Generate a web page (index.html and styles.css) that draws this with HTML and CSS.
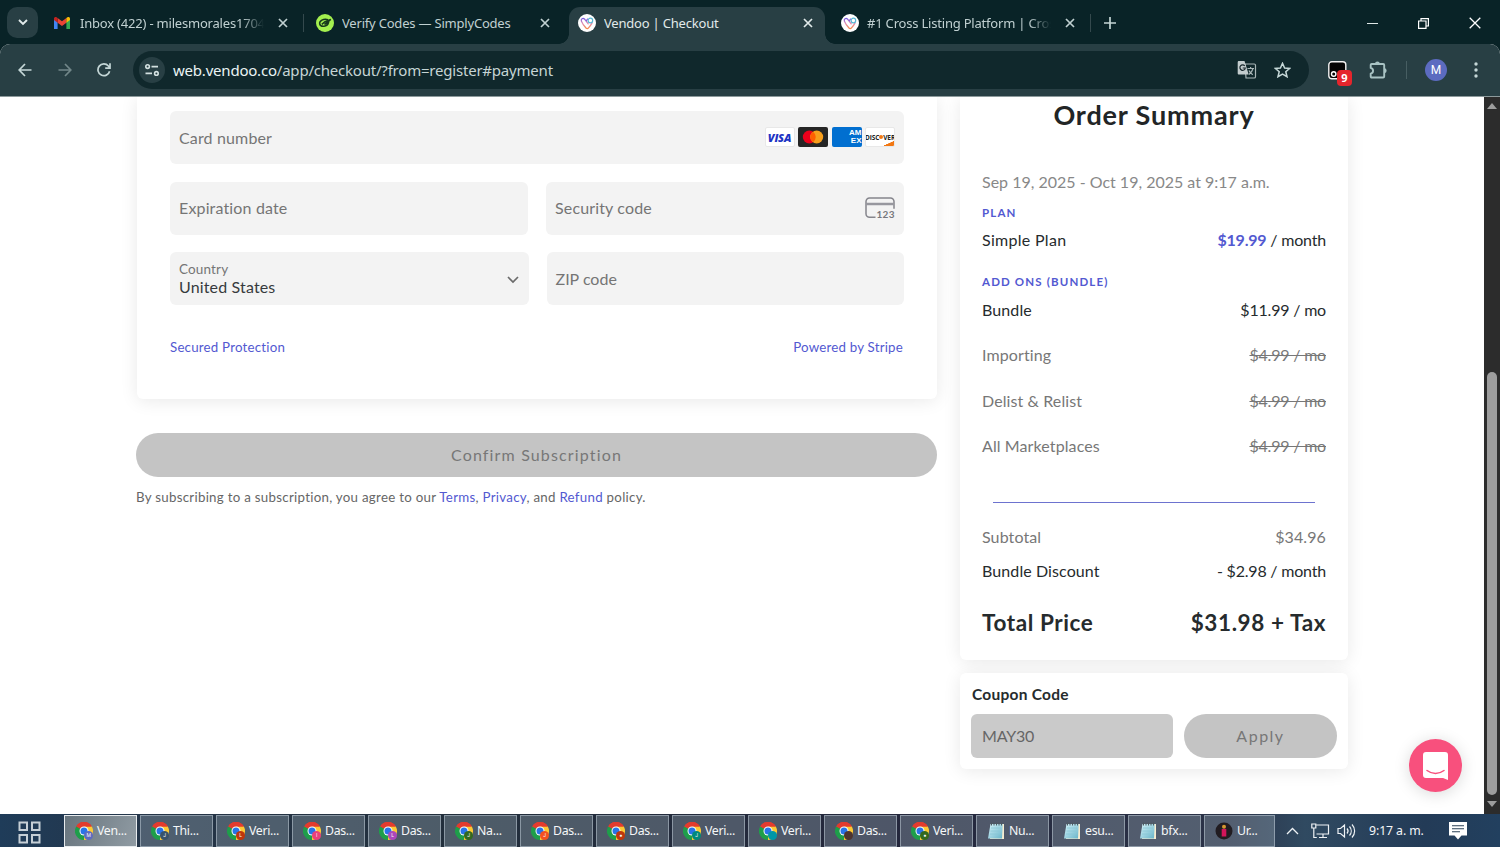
FILE: index.html
```html
<!DOCTYPE html>
<html lang="en">
<head>
    <meta charset="UTF-8">
    <title>Vendoo | Checkout</title>
    <link rel="stylesheet" href="styles.css">
</head>
<body>
    <svg class="defs" width="0" height="0">
        <defs>
            <linearGradient id="heartGrad" x1="0" y1="0" x2="0" y2="1">
                <stop offset="0" stop-color="#7b5be0"/>
                <stop offset="0.5" stop-color="#e08ab0"/>
                <stop offset="1" stop-color="#f58a4b"/>
            </linearGradient>
            <linearGradient id="noteGrad" x1="0" y1="0" x2="1" y2="1">
                <stop offset="0" stop-color="#d5f3fa"/>
                <stop offset="1" stop-color="#68b4c9"/>
            </linearGradient>
        </defs>
        <symbol id="close" viewBox="0 0 10 10"><path d="M1 1l8 8M9 1l-8 8" fill="none" stroke="currentColor" stroke-width="1.7"/></symbol>
        <symbol id="vendoo" viewBox="0 0 18 18">
            <circle cx="9" cy="9" r="9" fill="#fff"/>
            <path d="M10.200 9.800L6.600 5.200C4.900 3.300 2.500 5 3.500 7.400c.8 2.200 2.600 4.500 4.500 6.600.8.800 1.800.7 2.500-.1 1.600-1.800 2.700-3.300 3.600-5" fill="none" stroke="url(#heartGrad)" stroke-width="1.300" stroke-linecap="round"/>
            <path d="M8 7l2-2.300" stroke="#8a62dc" stroke-width="1.200"/>
            <circle cx="12.400" cy="6.500" r="2.300" fill="none" stroke="#58b8d4" stroke-width="1.200"/>
        </symbol>
        <symbol id="chrome" viewBox="0 0 48 48">
            <path d="M24 24L3.2 12A24 24 0 0 1 44.8 12z" fill="#e33b2e"/>
            <path d="M24 24L44.8 12A24 24 0 0 1 24 48z" fill="#fcc934"/>
            <path d="M24 24V48A24 24 0 0 1 3.2 12z" fill="#1e9e4a"/>
            <path d="M24 12h20.8L34 30z" fill="#fcc934"/>
            <path d="M3.2 12L14 30l10-18z" fill="#1e9e4a"/>
            <path d="M3.2 12L13.6 18 24 12h20.8A24 24 0 0 0 3.2 12z" fill="#e33b2e"/>
            <circle cx="24" cy="24" r="12" fill="#fff"/>
            <circle cx="24" cy="24" r="9.4" fill="#2874e8"/>
        </symbol>
        <symbol id="notepad" viewBox="0 0 18 18">
            <path d="M4 2h13v15H3z" fill="#f6ecd0"/>
            <path d="M3.5 2h12.2L15 16.5H1z" fill="url(#noteGrad)"/>
            <path d="M4 6h10M3.5 9h10M3 12h10" stroke="#89c6d6" stroke-width=".8"/>
            <path d="M4.5.5v3M7 .5v3M9.5 .5v3M12 .5v3M14.5 .5v3" stroke="#4d5960" stroke-width="1"/>
        </symbol>
    </svg>

    <header class="tabstrip">
        <button class="tab-search"><svg width="10" height="7" viewBox="0 0 10 7"><path d="M1 1l4 4 4-4" fill="none" stroke="#e2ebeb" stroke-width="1.9"/></svg></button>
        <div class="tab">
            <svg class="favicon" width="16" height="12" viewBox="0 0 16 12">
                <path d="M0 1v11h3.6V5z" fill="#4285f4"/>
                <path d="M12.4 5v7H16V1z" fill="#34a853"/>
                <path d="M3.6 1v4.7L8 9l4.4-3.3V1L8 4.3z" fill="#ea4335"/>
                <path d="M0 1.8C0 0 2-.6 3.6 1v4.7L0 3z" fill="#c5221f"/>
                <path d="M16 1.8C16 0 14-.6 12.4 1v4.7L16 3z" fill="#fbbc04"/>
            </svg>
            <span class="tab-title fade">Inbox (422) - milesmorales1704</span>
            <svg class="tab-close" width="10" height="10"><use href="#close"/></svg>
        </div>
        <div class="tab-sep"></div>
        <div class="tab">
            <svg class="favicon" width="18" height="18" viewBox="0 0 18 18">
                <circle cx="9" cy="9" r="9" fill="#a4f04f"/>
                <path d="M12 5.6C7.500 4.200 3 7 3.700 10c.8 3.300 7.800 3 8.800-1.500L8.500 10.400l6.300-5-5.800 2.300-3.200 2.600" fill="none" stroke="#17391d" stroke-width="1.500"/>
            </svg>
            <span class="tab-title">Verify Codes — SimplyCodes</span>
            <svg class="tab-close" width="10" height="10"><use href="#close"/></svg>
        </div>
        <div class="tab active">
            <svg class="favicon" width="18" height="18"><use href="#vendoo"/></svg>
            <span class="tab-title">Vendoo | Checkout</span>
            <svg class="tab-close" width="10" height="10"><use href="#close"/></svg>
        </div>
        <div class="tab">
            <svg class="favicon" width="18" height="18"><use href="#vendoo"/></svg>
            <span class="tab-title fade">#1 Cross Listing Platform | Cross</span>
            <svg class="tab-close" width="10" height="10"><use href="#close"/></svg>
        </div>
        <div class="tab-sep last"></div>
        <svg class="new-tab" width="12" height="12" viewBox="0 0 12 12"><path d="M6 0v12M0 6h12" stroke="#c4d5d5" stroke-width="1.7"/></svg>
        <div class="window-controls">
            <svg width="11" height="11" viewBox="0 0 11 11"><path d="M0 5.500h11" stroke="#dfe7e7"/></svg>
            <svg width="11" height="11" viewBox="0 0 11 11"><path d="M.6 3h7.400v7.400H.6zM3 3V.6h7.400V8H8" fill="none" stroke="#fff" stroke-width="1.200"/></svg>
            <svg width="12" height="12" viewBox="0 0 12 12"><path d="M.7.7l10.600 10.600M11.300.7L.7 11.300" stroke="#fff" stroke-width="1.300"/></svg>
        </div>
    </header>

    <nav class="toolbar">
        <div class="nav-buttons">
            <svg width="14" height="14" viewBox="0 0 14 14"><path d="M13.500 7H1.500M7 1L1.200 7 7 13" fill="none" stroke="#c5d7d7" stroke-width="1.700"/></svg>
            <svg width="14" height="14" viewBox="0 0 14 14"><path d="M.5 7h12M7 1l5.800 6L7 13" fill="none" stroke="#728789" stroke-width="1.700"/></svg>
            <svg width="14" height="14" viewBox="0 0 14 14"><path d="M12.600 8.200A5.900 5.900 0 1 1 11.400 3L13 4.800M13 .3v4.900H8.200" fill="none" stroke="#c5d7d7" stroke-width="1.700"/></svg>
        </div>
        <div class="omnibox">
            <span class="site-info"><svg width="14" height="12" viewBox="0 0 14 12" fill="none" stroke="#d3e0e0" stroke-width="1.600"><circle cx="2.600" cy="2.600" r="1.800"/><path d="M6.500 2.600H13M.5 9.400H7"/><circle cx="11.400" cy="9.400" r="1.800"/></svg></span>
            <span class="url"><b>web.vendoo.co</b>/app/checkout/?from=register#payment</span>
            <svg class="translate" width="20" height="20" viewBox="0 0 20 20">
                <path d="M8 4h9.200c.8 0 1.300.5 1.300 1.300v11.400c0 .8-.5 1.300-1.300 1.300H9z" fill="none" stroke="#a9b6b7" stroke-width="1.200"/>
                <path d="M2 1h5.500l4.200 13.500H2c-.8 0-1.300-.5-1.300-1.300V2.300C.7 1.500 1.200 1 2 1z" fill="#c3ccce"/>
                <path d="M7.800 6A2.700 2.700 0 1 0 8.300 8H5.700" fill="none" stroke="#18272c" stroke-width="1.200"/>
                <path d="M10.500 8.500H17M13.600 7v1.500M16 8.500c-.8 3-2.400 4.800-4 6M12 10.500c.8 2 2 3.200 3.800 4.300" fill="none" stroke="#a9b6b7" stroke-width="1.200"/>
            </svg>
            <svg width="17" height="16" viewBox="0 0 17 16"><path d="M8.500 1.300l2.100 4.700 5.100.4-3.900 3.300 1.200 5-4.500-2.700L4 14.700l1.200-5-3.900-3.300 5.100-.4z" fill="none" stroke="#c5d7d7" stroke-width="1.500"/></svg>
        </div>
        <div class="extension">
            <svg width="19" height="19" viewBox="0 0 19 19"><rect x=".8" y=".8" width="17" height="17" rx="3" fill="#050505" stroke="#f3f3f3" stroke-width="1.400"/><circle cx="5.700" cy="13" r="2.200" fill="none" stroke="#fff" stroke-width="1.400"/></svg>
            <span class="badge">9</span>
        </div>
        <svg class="puzzle" width="19" height="19" viewBox="0 0 19 19"><path d="M3 3h11.200a1 1 0 0 1 1 1v11.500a1 1 0 0 1-1 1H2.700a1 1 0 0 1-1-1v-2.900a2.900 2.900 0 0 0 0-5.700V4a1 1 0 0 1 1-1z" fill="none" stroke="#a9c3c4" stroke-width="1.900" stroke-linejoin="round"/><path d="M6 3a2.400 2.400 0 0 1 4.800 0zM15.200 7.300a2.400 2.400 0 0 1 0 4.900z" fill="#a9c3c4"/></svg>
        <div class="toolbar-sep"></div>
        <div class="avatar">M</div>
        <svg class="menu" width="4" height="16" viewBox="0 0 4 16" fill="#c5d7d7"><circle cx="2" cy="2" r="1.700"/><circle cx="2" cy="8" r="1.700"/><circle cx="2" cy="14" r="1.700"/></svg>
    </nav>

    <div class="viewport">
        <main class="page">
            <section class="payment">
                <div class="card payment-card">
                    <div class="field">
                        <span>Card number</span>
                        <div class="brands">
                            <span class="brand visa">VISA</span>
                            <span class="brand mastercard"><svg width="30" height="20" viewBox="0 0 30 20"><circle cx="11.300" cy="10" r="6.500" fill="#eb001b"/><circle cx="18.700" cy="10" r="6.500" fill="#f79e1b"/><path d="M15 4.700a6.500 6.500 0 0 1 0 10.600 6.500 6.500 0 0 1 0-10.600z" fill="#ff5f00"/></svg></span>
                            <span class="brand amex"><span>AM</span><span>EX</span></span>
                            <span class="brand discover">DISC<i></i>VER</span>
                        </div>
                    </div>
                    <div class="field-row">
                        <div class="field">Expiration date</div>
                        <div class="field">
                            <span>Security code</span>
                            <svg class="cvc" width="30" height="22" viewBox="0 0 30 22"><path d="M10.500 20.200H4.500A3.500 3.500 0 0 1 1 16.700V4.500A3.500 3.500 0 0 1 4.500 1h21A3.500 3.500 0 0 1 29 4.500v7.300" fill="none" stroke="#85858c" stroke-width="1.500"/><path d="M1 7h28" stroke="#97979e" stroke-width="2.500"/><text x="11.500" y="21">123</text></svg>
                        </div>
                    </div>
                    <div class="field-row">
                        <div class="field country">
                            <div><small>Country</small>United States</div>
                            <svg width="12" height="8" viewBox="0 0 12 8"><path d="M1 1l5 5 5-5" fill="none" stroke="#6b6b6b" stroke-width="1.700"/></svg>
                        </div>
                        <div class="field zip">ZIP code</div>
                    </div>
                    <div class="card-links"><a>Secured Protection</a><a>Powered by Stripe</a></div>
                </div>
                <button class="btn confirm">Confirm Subscription</button>
                <p class="terms">By subscribing to a subscription, you agree to our <a>Terms</a>, <a>Privacy</a>, and <a>Refund</a> policy.</p>
            </section>

            <aside class="sidebar">
                <div class="card summary">
                    <h2>Order Summary</h2>
                    <div class="period">Sep 19, 2025 - Oct 19, 2025 at 9:17 a.m.</div>
                    <h4>PLAN</h4>
                    <div class="line"><span class="plan-name">Simple Plan</span><span class="price"><b>$19.99</b> / month</span></div>
                    <h4 class="addons">ADD ONS (BUNDLE)</h4>
                    <div class="line"><span>Bundle</span><span class="price">$11.99 / mo</span></div>
                    <div class="line muted"><span>Importing</span><s class="price">$4.99 / mo</s></div>
                    <div class="line muted"><span>Delist &amp; Relist</span><s class="price">$4.99 / mo</s></div>
                    <div class="line muted"><span>All Marketplaces</span><s class="price">$4.99 / mo</s></div>
                    <hr>
                    <div class="line subtotal"><span>Subtotal</span><span>$34.96</span></div>
                    <div class="line discount"><span>Bundle Discount</span><span class="price">- $2.98 / month</span></div>
                    <div class="line total"><span>Total Price</span><span>$31.98 + Tax</span></div>
                </div>
                <div class="card coupon">
                    <label>Coupon Code</label>
                    <div class="coupon-row">
                        <div class="coupon-input">MAY30</div>
                        <button class="btn">Apply</button>
                    </div>
                </div>
            </aside>
            <div class="chat"><svg width="25" height="28" viewBox="0 0 25 28"><path d="M3 0h19a3 3 0 0 1 3 3v25l-5-2H3a3 3 0 0 1-3-3V3a3 3 0 0 1 3-3z" fill="#fff"/><path d="M4 18.500c5 3.900 12 3.900 17 0" fill="none" stroke="#f8507d" stroke-width="1.500" stroke-linecap="round"/></svg></div>
        </main>
        <div class="scrollbar">
            <i class="arrow up"></i>
            <i class="thumb"></i>
            <i class="arrow down"></i>
        </div>
    </div>

    <footer class="taskbar">
        <div class="start"><svg width="23" height="23" viewBox="0 0 23 23" fill="none" stroke="#c6cfd6" stroke-width="2"><path d="M1.500 1.500h7.500v7.500H1.500zM14 1.500h7.500v7.500H14zM1.500 14h7.500v7.500H1.500zM14 14h7.500v7.500H14z"/></svg></div>
        <div class="tasks">
            <div class="task current"><svg><use href="#chrome"/></svg><i class="who indigo">M</i>Ven...</div>
            <div class="task"><svg><use href="#chrome"/></svg><i class="who slate">J</i>Thi...</div>
            <div class="task"><svg><use href="#chrome"/></svg><i class="who rust">L</i>Veri...</div>
            <div class="task"><svg><use href="#chrome"/></svg><i class="who pink">I</i>Das...</div>
            <div class="task"><svg><use href="#chrome"/></svg><i class="who purple">L</i>Das...</div>
            <div class="task"><svg><use href="#chrome"/></svg><i class="who green">J</i>Na...</div>
            <div class="task"><svg><use href="#chrome"/></svg><i class="who orange">J</i>Das...</div>
            <div class="task"><svg><use href="#chrome"/></svg><i class="who rust">●</i>Das...</div>
            <div class="task"><svg><use href="#chrome"/></svg><i class="who teal">J</i>Veri...</div>
            <div class="task"><svg><use href="#chrome"/></svg><i class="who cyan"></i>Veri...</div>
            <div class="task"><svg><use href="#chrome"/></svg><i class="who brown"></i>Das...</div>
            <div class="task"><svg><use href="#chrome"/></svg><i class="who green">●</i>Veri...</div>
            <div class="task"><svg><use href="#notepad"/></svg>Nu...</div>
            <div class="task"><svg><use href="#notepad"/></svg>esu...</div>
            <div class="task"><svg><use href="#notepad"/></svg>bfx...</div>
            <div class="task"><svg viewBox="0 0 18 18"><circle cx="9" cy="9" r="8.500" fill="#211c21"/><circle cx="9" cy="4.800" r="2" fill="#d6962f"/><path d="M6.700 7h4.600v7.500H6.700z" fill="#d3145a"/></svg>Ur...</div>
        </div>
        <div class="tray">
            <svg class="chevron" width="13" height="8" viewBox="0 0 13 8"><path d="M1 7l5.500-5.500L12 7" fill="none" stroke="#eef2f5" stroke-width="1.300"/></svg>
            <svg class="network" width="19" height="16" viewBox="0 0 19 16" fill="none" stroke="#eef2f5" stroke-width="1.200"><path d="M5.500 2h12v9H5.500M8 14.500h8M12 11v3.500M.8 1h4v4h-4zM2.800 5v9.500h3"/></svg>
            <svg class="volume" width="19" height="16" viewBox="0 0 19 16" fill="none" stroke="#eef2f5" stroke-width="1.200"><path d="M1 5.500h2.500L7.500 2v12l-4-3.500H1zM10 5.500c1.300 1.500 1.300 3.500 0 5M12.500 3.500c2.300 2.600 2.300 6.400 0 9M15 1.500c3.500 3.700 3.500 9.300 0 13"/></svg>
            <span class="clock">9:17 a. m.</span>
            <svg class="notif" width="18" height="18" viewBox="0 0 18 18"><path d="M0 0h18v13.500h-5.500L9 17.500l-3.500-4H0z" fill="#fff"/><path d="M3 3.800h12M3 6.800h12M3 9.800h8" stroke="#2b4257" stroke-width="1.100"/></svg>
        </div>
    </footer>
</body>
</html>
```

FILE: styles.css
```css
* {
    box-sizing: border-box;
}
body {
    margin: 0;
    height: 847px;
    overflow: hidden;
    display: flex;
    flex-direction: column;
    background: #fff;
    font-family: Lato, "Open Sans", sans-serif;
}
.defs {
    position: absolute;
}
svg {
    display: block;
    flex: none;
}
button {
    border: none;
    padding: 0;
    font-family: inherit;
}

/* browser tabs */
.tabstrip {
    height: 44px;
    flex: none;
    display: flex;
    align-items: center;
    background: #092327;
    color: #c0d0d1;
    font: 13px "Noto Sans", "Open Sans", sans-serif;
    padding: 2px 0 0 7px;
}
.tab-search {
    width: 31px;
    height: 31px;
    margin: 0 7px 2px 0;
    border-radius: 10px;
    background: #283f44;
    display: flex;
    align-items: center;
    justify-content: center;
}
.tab {
    width: 258px;
    height: 37px;
    display: flex;
    align-items: center;
    padding: 0 15px 1px 9px;
}
.tab:first-of-type .favicon {
    margin-right: 10px;
}
.favicon {
    margin-right: 8px;
}
.tab-title {
    flex: 1;
    overflow: hidden;
    white-space: nowrap;
    margin-right: 14px;
    line-height: 20px;
    letter-spacing: -0.2px;
}
.fade {
    -webkit-mask-image: linear-gradient(90deg, #000 88%, transparent);
    mask-image: linear-gradient(90deg, #000 88%, transparent);
}
.tab-sep {
    width: 1px;
    height: 18px;
    margin: 0 3px 0 0;
    background: #34494d;
}
.tab-sep.last {
    margin: 0 13px 0 0;
}
.tab.active {
    position: relative;
    width: 256px;
    margin: 0 7px 0 4px;
    padding: 0 12px 5px 9px;
    align-self: flex-end;
    background: #283f44;
    border-radius: 11px 11px 0 0;
    color: #e1eaea;
}
.tab.active::before,
.tab.active::after {
    content: "";
    position: absolute;
    bottom: 0;
    width: 10px;
    height: 10px;
}
.tab.active::before {
    left: -10px;
    background: radial-gradient(circle at 0 0, transparent 9.500px, #283f44 10px);
}
.tab.active::after {
    right: -10px;
    background: radial-gradient(circle at 100% 0, transparent 9.500px, #283f44 10px);
}
.window-controls {
    margin: 0 19px 0 auto;
    display: flex;
    align-items: center;
    gap: 40px;
}

/* address bar */
.toolbar {
    height: 53px;
    flex: none;
    display: flex;
    align-items: center;
    background: linear-gradient(#283f44 52px, #8d9a9c 52px);
    border-radius: 10px 10px 0 0;
    box-shadow: 0 -10px 0 0 #092327;
    padding: 0 22px 1px 18px;
}
.tabstrip {
    position: relative;
}
.nav-buttons {
    display: flex;
    gap: 25.500px;
    width: 115px;
}
.omnibox {
    width: 1176px;
    height: 38px;
    display: flex;
    align-items: center;
    padding: 0 18px 0 6px;
    border-radius: 19px;
    background: #10282c;
}
.site-info {
    width: 26px;
    height: 26px;
    border-radius: 50%;
    background: #283f44;
    display: flex;
    align-items: center;
    justify-content: center;
}
.url {
    flex: 1;
    margin-left: 8px;
    font: 15px "Noto Sans", "Open Sans", sans-serif;
    letter-spacing: -0.210px;
    color: #c6d5d5;
}
.url b {
    font-weight: normal;
    color: #eaf4f4;
}
.translate {
    margin-right: 17px;
}
.extension {
    position: relative;
    margin: 0 22px 0 19px;
}
.badge {
    position: absolute;
    left: 9px;
    top: 9px;
    width: 15px;
    height: 16px;
    border-radius: 4px;
    background: #e5252c;
    color: #fff;
    font: bold 11px/16px "Open Sans", sans-serif;
    text-align: center;
}
.toolbar-sep {
    width: 1px;
    height: 18px;
    margin: 0 18px;
    background: #475e62;
}
.avatar {
    width: 22px;
    height: 22px;
    border-radius: 50%;
    background: #5c6bc0;
    color: #fff;
    font: 12px/22px Roboto, sans-serif;
    text-align: center;
}
.menu {
    margin-left: auto;
}

/* checkout page */
.viewport {
    height: 717px;
    flex: none;
    display: flex;
}
.page {
    position: relative;
    width: 1484px;
    overflow: hidden;
    display: flex;
    gap: 23px;
    padding-left: 136px;
    background: #fff;
}
a {
    color: #5359d1;
}
.card {
    background: #fff;
    border-radius: 6px;
    box-shadow: 0 2px 18px rgba(0, 0, 0, 0.09);
}
.payment {
    width: 801px;
}
.payment-card {
    height: 302px;
    margin-left: 1px;
    padding: 14px 33px 0;
    border-radius: 0 0 6px 6px;
}
.field-row {
    display: flex;
    gap: 18px;
    margin-top: 17.500px;
}
.field {
    flex: 1 1 0;
    height: 53px;
    display: flex;
    align-items: center;
    justify-content: space-between;
    padding: 0 9px 1px;
    border-radius: 6px;
    background: #f3f3f3;
    color: #757575;
    font-size: 16px;
    letter-spacing: 0.150px;
}
.field.zip {
    letter-spacing: 0;
}
.country {
    color: #363a3d;
    padding: 0 10px 2px 9px;
    line-height: 18px;
}
.country small {
    display: block;
    color: #757575;
    font-size: 13.500px;
}
.country svg {
    margin-top: 4px;
}
.brands {
    display: flex;
    gap: 3.500px;
}
.brand {
    width: 30px;
    height: 20px;
    border-radius: 2px;
    overflow: hidden;
    background: #fff;
    letter-spacing: 0;
}
.visa {
    border: 1px solid #e8e8e8;
    color: #1c34c4;
    font: italic 800 11px/19px "Open Sans", sans-serif;
    text-align: center;
    letter-spacing: -0.2px;
}
.mastercard {
    background: #252525;
}
.amex {
    display: flex;
    flex-direction: column;
    align-items: flex-end;
    justify-content: center;
    background: #016fd0;
    color: #fff;
    font: bold 8px/8px "Liberation Sans", sans-serif;
}
.amex span {
    height: 8px;
}
.discover {
    display: flex;
    align-items: center;
    justify-content: center;
    border: 1px solid #e8e8e8;
    background: linear-gradient(155deg, #fff 83%, #f27712 84%);
    color: #222;
    font: bold 6.500px "Open Sans", sans-serif;
    letter-spacing: -0.1px;
}
.discover i {
    flex: none;
    width: 4px;
    height: 4px;
    border-radius: 50%;
    background: #f27712;
}
.cvc {
    margin-top: 1px;
}
.cvc text {
    fill: #77777d;
    font: bold 10px Lato, sans-serif;
    letter-spacing: 0.3px;
}
.card-links {
    display: flex;
    justify-content: space-between;
    margin: 33px 1px 0 0;
    line-height: 18px;
    font-size: 13.300px;
    letter-spacing: 0.210px;
}
.btn {
    border-radius: 22px;
    background: #c4c4c4;
    color: #777;
    height: 44px;
    padding-bottom: 2px;
    font-size: 16px;
    letter-spacing: 1.500px;
}
.confirm {
    display: block;
    width: 801px;
    margin-top: 34px;
    letter-spacing: 1.150px;
}
.terms {
    margin: 10px 0 0;
    font-size: 13.300px;
    line-height: 20px;
    letter-spacing: 0.280px;
    color: #666;
}
.sidebar {
    width: 388px;
}
.summary {
    height: 563px;
    padding: 0 22px;
    border-radius: 0 0 6px 6px;
    color: #777;
}
h2 {
    margin: 0 0 38px;
    text-align: center;
    color: #222526;
    font-size: 27px;
    line-height: 35px;
    letter-spacing: 0.850px;
}
.period {
    font-size: 16px;
    line-height: 24px;
    color: #888;
}
h4 {
    margin: 11px 0 7px;
    color: #5359d1;
    font-size: 11.500px;
    line-height: 16px;
    letter-spacing: 1.150px;
}
h4.addons {
    margin: 22px 0 8px;
}
.line {
    display: flex;
    justify-content: space-between;
    font-size: 16px;
    line-height: 24px;
    letter-spacing: 0.1px;
    color: #262b2d;
}
.line b {
    color: #5359d1;
}
.plan-name {
    letter-spacing: 0.3px;
}
.price {
    letter-spacing: -0.2px;
}
.line.muted {
    margin-top: 21.300px;
    color: #777;
}
hr {
    height: 1.500px;
    margin: 44px 11px 21.600px;
    border: none;
    background: #6d73cf;
}
.line.subtotal {
    color: #777;
}
.discount {
    margin-top: 10px;
}
.line.total {
    margin-top: 25px;
    font-size: 22.500px;
    line-height: 30px;
    font-weight: bold;
    letter-spacing: 0.600px;
}
.coupon {
    height: 96px;
    margin-top: 13px;
    padding: 10px 11px;
}
.coupon label {
    display: block;
    margin: 0 0 9px 1px;
    font-size: 15.500px;
    line-height: 22px;
    font-weight: bold;
    letter-spacing: 0.250px;
    color: #262b2d;
}
.coupon-row {
    display: flex;
    gap: 11px;
}
.coupon-input {
    width: 202px;
    height: 44px;
    padding-left: 11px;
    border-radius: 6px;
    background: #cacaca;
    color: #666;
    font-size: 16px;
    line-height: 44px;
    letter-spacing: -0.2px;
}
.coupon .btn {
    width: 153px;
}
.chat {
    position: absolute;
    right: 22px;
    bottom: 22px;
    width: 53px;
    height: 53px;
    border-radius: 50%;
    background: #f8507d;
    box-shadow: 0 2px 16px rgba(0, 0, 0, 0.15);
    display: flex;
    align-items: center;
    justify-content: center;
}
.scrollbar {
    width: 16px;
    background: #2c2c2c;
    display: flex;
    flex-direction: column;
    align-items: center;
    padding: 6px 0 7px;
}
.arrow {
    border: 5px solid transparent;
}
.arrow.up {
    border-top: 0;
    border-bottom: 6px solid #9d9d9d;
}
.arrow.down {
    border-bottom: 0;
    border-top: 6px solid #9d9d9d;
}
.thumb {
    width: 10px;
    height: 423px;
    margin: auto 0 6px;
    border-radius: 5px;
    background: #9d9d9d;
}

/* windows taskbar */
.taskbar {
    height: 33px;
    flex: none;
    display: flex;
    background: linear-gradient(90deg, #1f3c59, #253548 10%, #222f3c 30%, #24273c 60%, #2b3348 82%, #304a61 87%, #233b57 95%, #22405f);
    color: #f5f7f8;
    font: 12.300px "Noto Sans", "Open Sans", sans-serif;
}
.start {
    width: 64px;
    padding: 7px 0 0 18px;
}
.tasks {
    display: flex;
    gap: 3px;
    padding-top: 1px;
}
.task {
    position: relative;
    width: 73px;
    height: 32px;
    display: flex;
    align-items: center;
    padding: 0 0 1px 10px;
    border: 1px solid rgba(200, 212, 222, 0.5);
    background: rgba(160, 180, 190, 0.34);
    white-space: nowrap;
    letter-spacing: -0.3px;
}
.task:last-child {
    width: 71px;
}
.task.current {
    background: linear-gradient(110deg, #68757e, #909ba3);
    border-color: #e7ebee;
}
.task svg {
    width: 18px;
    height: 18px;
    margin-right: 4px;
}
.who {
    position: absolute;
    left: 19px;
    top: 15px;
    width: 9px;
    height: 9px;
    border-radius: 50%;
    font: 5px/9px Roboto, sans-serif;
    text-align: center;
}
.indigo { background: #5c6bc0; }
.slate { background: #38536b; }
.rust { background: #bf360c; }
.pink { background: #ec407a; }
.purple { background: #ab47bc; }
.green { background: #33691e; }
.orange { background: #f4511e; }
.teal { background: #00897b; }
.cyan { background: #0097a7; }
.brown { background: #4e342e; }
.tray {
    flex: 1;
    display: flex;
    align-items: center;
    padding-left: 11px;
}
.network {
    margin-left: 12px;
}
.volume {
    margin-left: 7px;
}
.clock {
    margin-left: 13px;
    letter-spacing: -0.1px;
}
.notif {
    margin-left: 25px;
}
```
